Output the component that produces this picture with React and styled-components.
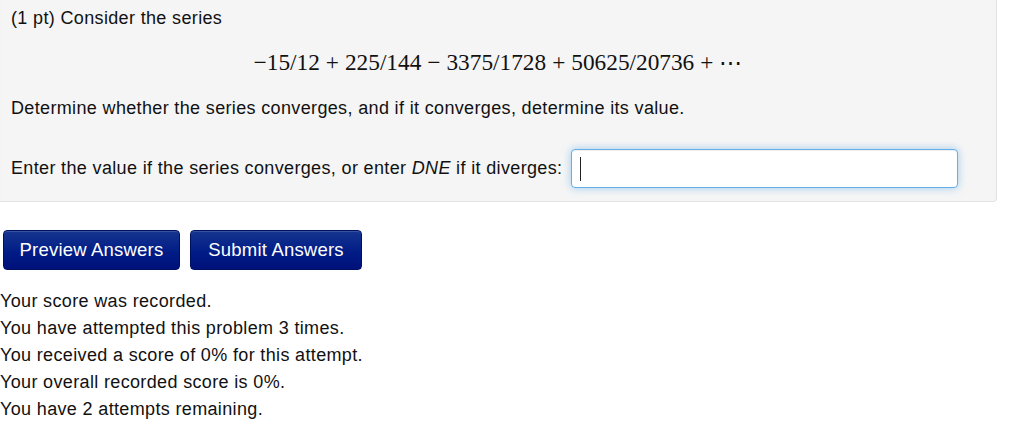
import React from "react";
import styled, { createGlobalStyle } from "styled-components";

const Global = createGlobalStyle`
  html, body { margin: 0; padding: 0; background: #fff; }
  body { font-family: "Liberation Sans", Arial, Helvetica, sans-serif; color: #111; }
`;

const Page = styled.div`
  width: 1024px;
  height: 442px;
  overflow: hidden;
`;

const Panel = styled.div`
  width: 997px;
  box-sizing: border-box;
  margin-top: -2px;
  background: #f5f5f5;
  border: 1px solid #e3e3e3;
  border-left: none;
  border-radius: 0 0 4px 0;
  box-shadow: inset 0 1px 1px rgba(0,0,0,0.05);
  padding: 8px 11px 13px 11px;
  font-size: 18px;
  letter-spacing: 0.35px;
`;

const Para = styled.p`
  margin: 0;
  line-height: 22px;
`;

const MathLine = styled.div`
  font-family: "Liberation Serif", "Times New Roman", serif;
  font-size: 23.3px;
  letter-spacing: 0;
  text-align: center;
  margin: 18px 0 20px 0;
  line-height: 30px;
`;

const Op = styled.span`
  margin: 0 6px;
`;

const AnswerRow = styled.div`
  display: flex;
  align-items: center;
  gap: 9px;
  margin-top: 30px;
`;

const Field = styled.div`
  width: 387px;
  height: 39px;
  box-sizing: border-box;
  background: #fff;
  border: 1px solid #66afe9;
  border-radius: 4px;
  box-shadow: inset 0 1px 1px rgba(0,0,0,0.075), 0 0 8px rgba(102,175,233,0.6);
  display: flex;
  align-items: center;
  padding-left: 8px;
`;

const Caret = styled.span`
  width: 1px;
  height: 24px;
  background: #222;
`;

const Buttons = styled.div`
  display: flex;
  gap: 10px;
  padding-left: 3px;
  margin-top: 28px;
`;

const Button = styled.button`
  height: 40px;
  padding: 0;
  width: ${(p) => p.$w}px;
  font-family: "Liberation Sans", Arial, Helvetica, sans-serif;
  font-size: 18.5px;
  letter-spacing: 0.2px;
  color: #fff;
  background: linear-gradient(to bottom, #15358f 0%, #001a85 60%, #00117a 100%);
  border: 1px solid #001060;
  border-radius: 4px;
  box-shadow: inset 0 1px 0 rgba(255,255,255,0.15);
  cursor: pointer;
`;

const Status = styled.div`
  margin-top: 18px;
  font-size: 18px;
  letter-spacing: 0.35px;
  line-height: 27px;
`;

export default function App() {
  return (
    <Page>
      <Global />
      <Panel>
        <Para>(1 pt) Consider the series</Para>
        <MathLine>
          −15/12<Op>+</Op>225/144<Op>−</Op>3375/1728<Op>+</Op>50625/20736<Op>+</Op>⋯
        </MathLine>
        <Para>Determine whether the series converges, and if it converges, determine its value.</Para>
        <AnswerRow>
          <span>
            Enter the value if the series converges, or enter <i>DNE</i> if it diverges:
          </span>
          <Field>
            <Caret />
          </Field>
        </AnswerRow>
      </Panel>
      <Buttons>
        <Button $w={177}>Preview Answers</Button>
        <Button $w={172}>Submit Answers</Button>
      </Buttons>
      <Status>
        <div>Your score was recorded.</div>
        <div>You have attempted this problem 3 times.</div>
        <div>You received a score of 0% for this attempt.</div>
        <div>Your overall recorded score is 0%.</div>
        <div>You have 2 attempts remaining.</div>
      </Status>
    </Page>
  );
}
